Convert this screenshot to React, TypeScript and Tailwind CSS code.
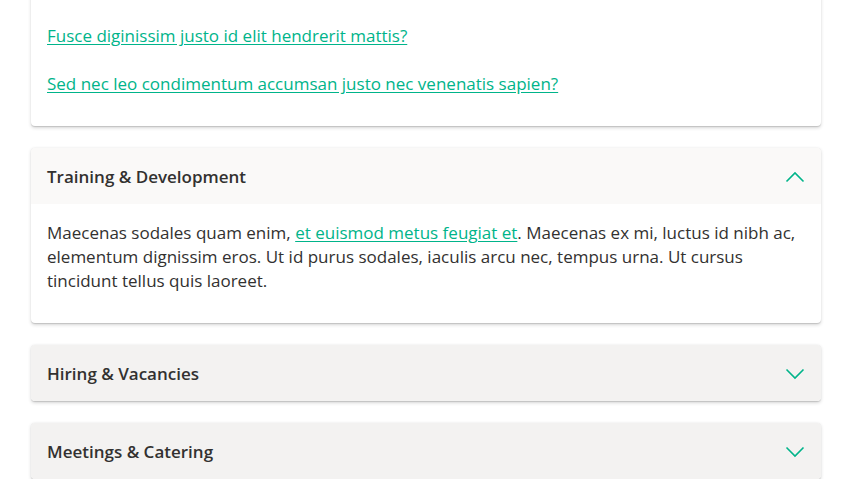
import { useState } from 'react';

const font = { fontFamily: '"Open Sans", "Noto Sans", sans-serif' };

function Chevron({ up }: { up: boolean }) {
  return (
    <svg width="20" height="12" viewBox="0 0 20 12" fill="none" className="shrink-0">
      <path
        d={up ? 'M1.5 10.5 L10 2 L18.5 10.5' : 'M1.5 1.5 L10 10 L18.5 1.5'}
        stroke="#00b48a"
        strokeWidth="1.6"
      />
    </svg>
  );
}

type Section = { title: string; body?: React.ReactNode };

const sections: Section[] = [
  {
    title: 'Training & Development',
    body: (
      <p>
        Maecenas sodales quam enim,{' '}
        <a href="#" className="text-[#00b48a] underline underline-offset-2">
          et euismod metus feugiat et
        </a>
        . Maecenas ex mi, luctus id nibh ac,
        <br />
        elementum dignissim eros. Ut id purus sodales, iaculis arcu nec, tempus urna. Ut cursus
        <br />
        tincidunt tellus quis laoreet.
      </p>
    ),
  },
  { title: 'Hiring & Vacancies' },
  { title: 'Meetings & Catering' },
];

export default function App() {
  const [open, setOpen] = useState('Training & Development');

  return (
    <div className="min-h-screen bg-white px-[31px] text-[17px] leading-6 text-[#323130]" style={font}>
      {/* previous section, scrolled partly out of view */}
      <div className="-mt-[10px] rounded-sm bg-white shadow-[0_1.6px_3.6px_rgba(0,0,0,0.16),0_0.3px_0.9px_rgba(0,0,0,0.12)]">
        <div className="px-4 pt-[34px] pb-[30px]">
          <p className="mb-6">
            <a href="#" className="text-[#00b48a] underline underline-offset-2">
              Fusce diginissim justo id elit hendrerit mattis?
            </a>
          </p>
          <p>
            <a href="#" className="text-[#00b48a] underline underline-offset-2">
              Sed nec leo condimentum accumsan justo nec venenatis sapien?
            </a>
          </p>
        </div>
      </div>

      {sections.map((s) => {
        const isOpen = open === s.title;
        return (
          <div
            key={s.title}
            className="mt-[22px] overflow-hidden rounded-sm bg-white shadow-[0_1.6px_3.6px_rgba(0,0,0,0.16),0_0.3px_0.9px_rgba(0,0,0,0.12)]"
          >
            <button
              onClick={() => setOpen(isOpen ? '' : s.title)}
              className={`flex h-14 w-full items-center justify-between px-4 pt-px text-left ${
                isOpen ? 'bg-[#faf9f8]' : 'bg-[#f3f2f1]'
              }`}
            >
              <span className="font-semibold">{s.title}</span>
              <Chevron up={isOpen} />
            </button>
            {isOpen && s.body && <div className="px-4 pt-[17px] pb-[30px]">{s.body}</div>}
          </div>
        );
      })}
    </div>
  );
}
